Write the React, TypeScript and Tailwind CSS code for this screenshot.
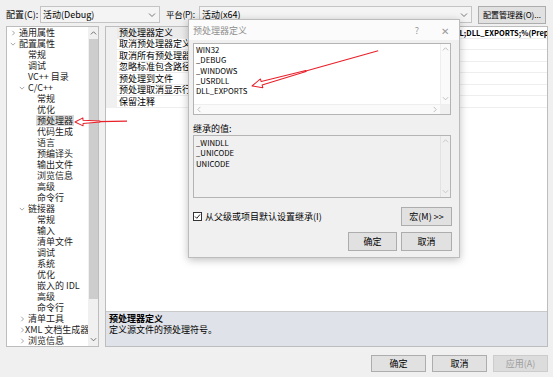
import React from 'react';

type Dir = 'up' | 'down' | 'left' | 'right';
const Chev = ({ dir, className = '' }: { dir: Dir; className?: string }) => {
  const p: Record<Dir, string> = {
    up: 'M1 5 L4 2 L7 5',
    down: 'M1 2.5 L4 5.5 L7 2.5',
    left: 'M5 1 L2 4 L5 7',
    right: 'M3 1 L6 4 L3 7',
  };
  return (
    <svg width="8" height="8" viewBox="0 0 8 8" className={className}>
      <path d={p[dir]} fill="none" stroke="currentColor" strokeWidth="1" />
    </svg>
  );
};

type Item = { t: string; l: number; a?: 'r' | 'd'; sel?: boolean };
const tree: Item[] = [
  { t: '通用属性', l: 0, a: 'r' },
  { t: '配置属性', l: 0, a: 'd' },
  { t: '常规', l: 1 },
  { t: '调试', l: 1 },
  { t: 'VC++ 目录', l: 1 },
  { t: 'C/C++', l: 1, a: 'd' },
  { t: '常规', l: 2 },
  { t: '优化', l: 2 },
  { t: '预处理器', l: 2, sel: true },
  { t: '代码生成', l: 2 },
  { t: '语言', l: 2 },
  { t: '预编译头', l: 2 },
  { t: '输出文件', l: 2 },
  { t: '浏览信息', l: 2 },
  { t: '高级', l: 2 },
  { t: '命令行', l: 2 },
  { t: '链接器', l: 1, a: 'd' },
  { t: '常规', l: 2 },
  { t: '输入', l: 2 },
  { t: '清单文件', l: 2 },
  { t: '调试', l: 2 },
  { t: '系统', l: 2 },
  { t: '优化', l: 2 },
  { t: '嵌入的 IDL', l: 2 },
  { t: '高级', l: 2 },
  { t: '命令行', l: 2 },
  { t: '清单工具', l: 1, a: 'r' },
  { t: 'XML 文档生成器', l: 1, a: 'r' },
  { t: '浏览信息', l: 1, a: 'r' },
];

const props = [
  '预处理器定义',
  '取消预处理器定义',
  '取消所有预处理器定义',
  '忽略标准包含路径',
  '预处理到文件',
  '预处理取消显示行号',
  '保留注释',
];

const indent = ['pl-[2px]', 'pl-[11px]', 'pl-[20px]'];

function Btn({ children, w, disabled }: { children: React.ReactNode; w: string; disabled?: boolean }) {
  return (
    <div
      className={`${w} h-full flex items-center justify-center border whitespace-nowrap ${
        disabled ? 'border-[#cccccc] bg-[#dcdcdc] text-[#9d9d9d]' : 'border-[#adadad] bg-[#e1e1e1] text-black'
      }`}
    >
      {children}
    </div>
  );
}

export default function App() {
  return (
    <div className="relative w-[553px] h-[377px] overflow-hidden whitespace-nowrap bg-[#f0f0f0] text-[9px] leading-[11px] text-black font-['Noto_Sans_CJK_SC','Microsoft_YaHei',sans-serif]">
      {/* top bar */}
      <div className="flex items-center h-[17px] mt-[6px] pl-[6px]">
        <span className="w-[34px] shrink-0">配置(C):</span>
        <div className="w-[120px] shrink-0 h-full flex items-center justify-between border border-[#c4c4c4] bg-[#f4f4f4] pl-[2px] pr-[3px]">
          <span>活动(Debug)</span>
          <Chev dir="down" className="text-[#777]" />
        </div>
        <span className="ml-[6px] w-[33px] shrink-0 text-[8.5px] tracking-[-0.3px]">平台(P):</span>
        <div className="w-[273px] shrink-0 h-full flex items-center justify-between border border-[#c4c4c4] bg-[#f4f4f4] pl-[2px] pr-[3px]">
          <span>活动(x64)</span>
          <Chev dir="down" className="text-[#777]" />
        </div>
        <div className="ml-[6px] w-[68px] shrink-0 h-[18px] text-[8px]">
          <Btn w="w-full">配置管理器(O)...</Btn>
        </div>
      </div>

      {/* main */}
      <div className="flex h-[321px] mt-[3px] pl-[6px]">
        {/* tree */}
        <div className="w-[93px] h-full border border-[#bdbdbd] bg-white flex">
          <div className="flex-1 overflow-hidden text-[#1b1b1b]">
            {tree.map((it, i) => (
              <div key={i} className={`flex items-center h-[11px] ${indent[it.l]}`}>
                <div className="w-[10px] flex items-center pl-[1px] text-[#8a8a8a]">
                  {it.a === 'r' && <Chev dir="right" className="w-[6px] h-[6px]" />}
                  {it.a === 'd' && <Chev dir="down" className="w-[6px] h-[6px]" />}
                </div>
                <span className={it.sel ? 'bg-[#dadada] px-[1px] -ml-[1px]' : ''}>{it.t}</span>
              </div>
            ))}
          </div>
          <div className="w-[10px] h-full bg-[#f0f0f0] flex flex-col items-center">
            <Chev dir="up" className="mt-[3px] text-[#606060] w-[7px] h-[7px]" />
            <div className="mt-[2px] w-[9px] h-[260px] bg-[#cdcdcd]" />
            <div className="flex-1" />
            <Chev dir="down" className="mb-[3px] text-[#606060] w-[7px] h-[7px]" />
          </div>
        </div>

        {/* property panel */}
        <div className="ml-[6px] w-[443px] h-full border border-[#bdbdbd] bg-white flex flex-col">
          <div className="flex-1">
            {props.map((p, i) => (
              <div key={i} className="flex h-[11.5px]">
                <div className="w-[11px] bg-[#f0f0f0]" />
                <div
                  className={`w-[206px] pl-[2px] border-b border-[#eeeeee] flex items-center overflow-hidden ${
                    i === 0 ? 'bg-[#ebebeb]' : ''
                  }`}
                >
                  {p}
                </div>
                <div className="flex-1 pl-[3px] border-b border-l border-[#eeeeee] flex items-center overflow-hidden font-bold text-[7.5px]">
                  {i === 0 ? 'WIN32;_DEBUG;_WINDOWS;_USRDLL;DLL_EXPORTS;%(PreprocessorDefinitions)' : ''}
                </div>
              </div>
            ))}
          </div>
          <div className="h-[35px] border-t border-[#c9c9c9] bg-[#dfe2e8] px-[3px] pt-[1px]">
            <div className="font-bold">预处理器定义</div>
            <div>定义源文件的预处理符号。</div>
          </div>
        </div>
      </div>

      {/* bottom buttons */}
      <div className="flex justify-end gap-[6px] h-[17px] mt-[8px] pr-[5px]">
        <Btn w="w-[55px]">确定</Btn>
        <Btn w="w-[55px]">取消</Btn>
        <Btn w="w-[55px]" disabled>
          应用(A)
        </Btn>
      </div>

      {/* dialog */}
      <div className="absolute left-[188px] top-[19px] w-[272px] h-[239px] bg-[#f0f0f0] border border-[#bcbcbc] shadow-[0_2px_8px_rgba(0,0,0,0.25)] flex flex-col">
        <div className="h-[20px] bg-[#fbfbfb] flex items-center pl-[4px] text-[#8f8f8f]">
          <span className="flex-1">预处理器定义</span>
          <span className="w-[14px] mr-[14px] text-center text-[#9a9a9a]">?</span>
          <span className="w-[14px] mr-[7px] text-center text-[10px] text-[#9a9a9a]">✕</span>
        </div>
        <div className="px-[4px]">
          <div className="mt-[3px] h-[72px] w-[258px] border border-[#b4b4b4] bg-white flex flex-col">
            <div className="flex flex-1">
              <div className="flex-1 pl-[2px] pt-[1px] text-[7.75px] leading-[10.25px]">
                <div>WIN32</div>
                <div>_DEBUG</div>
                <div>_WINDOWS</div>
                <div>_USRDLL</div>
                <div>DLL_EXPORTS</div>
              </div>
              <div className="w-[10px] border-l border-[#eeeeee] bg-[#fafafa] flex flex-col items-center justify-between py-[2px] text-[#b8b8b8]">
                <Chev dir="up" className="w-[7px] h-[7px]" />
                <Chev dir="down" className="w-[7px] h-[7px]" />
              </div>
            </div>
            <div className="h-[10px] flex border-t border-[#eeeeee] bg-[#fafafa]">
              <div className="flex-1 flex items-center justify-between px-[2px] text-[#b8b8b8]">
                <Chev dir="left" className="w-[7px] h-[7px]" />
                <Chev dir="right" className="w-[7px] h-[7px]" />
              </div>
              <div className="w-[10px] bg-[#f0f0f0]" />
            </div>
          </div>
          <div className="mt-[8px] h-[11px]">继承的值:</div>
          <div className="mt-[1px] h-[63px] w-[258px] border border-[#b4b4b4] bg-[#f0f0f0] flex">
            <div className="flex-1 pl-[2px] pt-[2px] text-[7.75px] leading-[10.3px]">
              <div>_WINDLL</div>
              <div>_UNICODE</div>
              <div>UNICODE</div>
            </div>
            <div className="w-[10px] border-l border-[#e2e2e2] flex flex-col items-center justify-between py-[2px] text-[#c4c4c4]">
              <Chev dir="up" className="w-[7px] h-[7px]" />
              <Chev dir="down" className="w-[7px] h-[7px]" />
            </div>
          </div>
          <div className="mt-[9px] h-[19px] flex items-center w-[259px]">
            <div className="w-[9px] h-[9px] border border-[#333] bg-white flex items-center justify-center">
              <svg width="7" height="7" viewBox="0 0 7 7">
                <path d="M1 3.5 L2.8 5.3 L6 1.5" fill="none" stroke="#222" strokeWidth="1" />
              </svg>
            </div>
            <span className="ml-[3px] flex-1">从父级或项目默认设置继承(I)</span>
            <div className="w-[51px] h-full">
              <Btn w="w-full">宏(M) &gt;&gt;</Btn>
            </div>
          </div>
          <div className="mt-[6px] h-[19px] flex justify-end gap-[4px] w-[259px]">
            <Btn w="w-[49px]">确定</Btn>
            <Btn w="w-[51px]">取消</Btn>
          </div>
        </div>
      </div>

      {/* red annotation arrows */}
      <svg className="absolute left-0 top-0 pointer-events-none" width="553" height="377" viewBox="0 0 553 377">
        <g transform="translate(252 86) rotate(-15.6)">
          <line x1="55" y1="0" x2="131" y2="0" stroke="#e8202a" strokeWidth="1.2" />
          <polygon
            points="0,0 10,-4.5 10,-1.8 56,-0.5 56,0.5 10,1.8 10,4.5"
            fill="white"
            stroke="#e8202a"
            strokeWidth="1"
            strokeLinejoin="round"
          />
        </g>
        <g transform="translate(75 122) rotate(-1)">
          <line x1="24" y1="0" x2="52" y2="0" stroke="#e8202a" strokeWidth="1.2" />
          <polygon
            points="0,0 8,-4 8,-1.6 25,-0.5 25,0.5 8,1.6 8,4"
            fill="white"
            stroke="#e8202a"
            strokeWidth="1"
            strokeLinejoin="round"
          />
        </g>
      </svg>
    </div>
  );
}
